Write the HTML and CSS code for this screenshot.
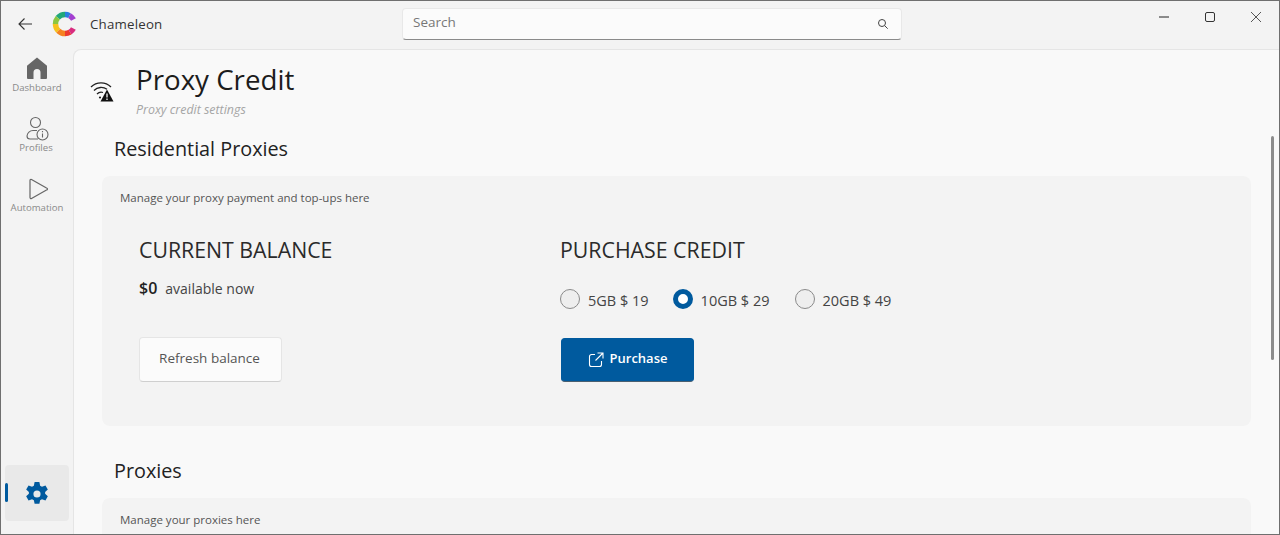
FILE: index.html
```html
<!DOCTYPE html>
<html lang="en">
<head>
<meta charset="utf-8">
<title>Chameleon</title>
<link rel="stylesheet" href="styles.css">
</head>
<body>
<div class="window">
  <header class="titlebar">
    <div class="tb-left">
      <svg class="back" width="16" height="14" viewBox="0 0 16 14"><path d="M15 7H2M7.500 1.500 2 7l5.500 5.500" fill="none" stroke="#333" stroke-width="1.100"/></svg>
      <svg class="logo" width="26" height="26" viewBox="0 0 26 26" fill="none" stroke-width="5.500">
        <path d="M13 3.500A9.500 9.500 0 0 0 5.800 6.800" stroke="#22a87a"/>
        <path d="M5.800 6.800A9.500 9.500 0 0 0 3.500 13" stroke="#8cc63f"/>
        <path d="M3.500 13A9.500 9.500 0 0 0 6.300 19.700" stroke="#f6c21c"/>
        <path d="M6.300 19.700A9.500 9.500 0 0 0 13 22.500" stroke="#f58220"/>
        <path d="M13 22.500A9.500 9.500 0 0 0 18 21.100" stroke="#ec3a2e"/>
        <path d="M18 21.100A9.500 9.500 0 0 0 21.400 17.500" stroke="#d82c7f"/>
        <path d="M13 3.500A9.500 9.500 0 0 1 17.500 4.600" stroke="#2a7fe0"/>
        <path d="M17.500 4.600A9.500 9.500 0 0 1 21.500 8.500" stroke="#a33fd0"/>
      </svg>
      <span class="app-name">Chameleon</span>
    </div>
    <div class="search">
      <span class="search-text">Search</span>
      <svg width="12" height="12" viewBox="0 0 12 12" fill="none" stroke="#444"><circle cx="5" cy="5" r="3.500"/><path d="m7.700 7.700 3 3"/></svg>
    </div>
    <div class="winctl">
      <svg width="12" height="12" viewBox="0 0 12 12"><path d="M1 6h10" stroke="#222" stroke-width="1"/></svg>
      <svg width="12" height="12" viewBox="0 0 12 12"><rect x="1.500" y="1.500" width="9" height="9" rx="1.500" fill="none" stroke="#333"/></svg>
      <svg width="12" height="12" viewBox="0 0 12 12"><path d="m1 1 10 10M11 1 1 11" stroke="#444" stroke-width=".9"/></svg>
    </div>
  </header>
  <div class="body">
    <nav class="sidebar">
      <a class="nav-item">
        <svg width="24" height="24" viewBox="0 0 24 24"><path d="M12 1.500 2 9.800V22a1 1 0 0 0 1 1h5.500v-6.500a3.500 3.500 0 0 1 7 0V23H21a1 1 0 0 0 1-1V9.800z" fill="#666"/></svg>
        <span>Dashboard</span>
      </a>
      <a class="nav-item">
        <svg width="26" height="26" viewBox="0 0 26 26" fill="none" stroke="#666" stroke-width="1.100"><circle cx="11.500" cy="6.500" r="5"/><path d="M13 14.500h-4a6 6 0 0 0-6 5.500 3 3 0 0 0 3 3h8"/><circle cx="18.500" cy="18.500" r="5.500"/><path d="M18.500 17.500v4M18.500 15v1.300"/></svg>
        <span class="label-profiles">Profiles</span>
      </a>
      <a class="nav-item">
        <svg class="icon-play" width="22" height="24" viewBox="0 0 22 24" fill="none" stroke="#666" stroke-width="1.200"><path d="M3 3.500v17a1 1 0 0 0 1.500.9L19.500 13a1 1 0 0 0 0-2L4.500 2.600A1 1 0 0 0 3 3.500z" stroke-linejoin="round"/></svg>
        <span>Automation</span>
      </a>
      <div class="nav-spacer"></div>
      <a class="nav-settings">
        <i class="nav-mark"></i>
        <svg class="gear" width="26" height="26" viewBox="0 0 24 24"><path fill="#005a9e" fill-rule="evenodd" d="M9.800 1h4.400l.7 3.300 1.700.9 3.200-1.100 2.200 3.800-2.500 2.300v1.600l2.500 2.300-2.200 3.800-3.200-1.100-1.700.9-.7 3.300H9.800l-.7-3.300-1.700-.9-3.200 1.100-2.200-3.800 2.500-2.300v-1.600L2 7.900l2.200-3.800 3.200 1.100 1.700-.9zM12 8.700a3.300 3.300 0 1 0 0 6.600 3.300 3.300 0 0 0 0-6.600z"/></svg>
      </a>
    </nav>
    <main class="content">
      <div class="page-head">
        <svg class="page-icon" width="24" height="22" viewBox="0 0 24 22" fill="none" stroke="#222" stroke-width="1.300">
          <path d="M1 6a14 14 0 0 1 20 0M4 9.500a10 10 0 0 1 13-1.200M7 13a6 6 0 0 1 6-1.500"/>
          <circle cx="10" cy="16.500" r="1.100" fill="#222" stroke="none"/>
          <path d="M17 8.500 23.500 20.500h-13z" fill="#111" stroke="none"/>
          <path d="M17 12.500v4M17 17.500v1.500" stroke="#f9f9f9" stroke-width="1.300"/>
        </svg>
        <div>
          <h1>Proxy Credit</h1>
          <p class="subtitle">Proxy credit settings</p>
        </div>
      </div>
      <h2>Residential Proxies</h2>
      <section class="card">
        <p class="card-note">Manage your proxy payment and top-ups here</p>
        <div class="columns">
          <div class="col-balance">
            <h3>CURRENT BALANCE</h3>
            <div class="balance"><b>$0</b><span>available now</span></div>
            <button class="btn"><span class="refresh-label">Refresh balance</span></button>
          </div>
          <div class="col-purchase">
            <h3>PURCHASE CREDIT</h3>
            <div class="radios">
              <label class="radio"><i class="dot"></i><span>5GB $ 19</span></label>
              <label class="radio"><i class="dot on"></i><span>10GB $ 29</span></label>
              <label class="radio"><i class="dot"></i><span>20GB $ 49</span></label>
            </div>
            <button class="btn primary">
              <svg width="16" height="16" viewBox="0 0 16 16" fill="none" stroke="#fff" stroke-width="1.100"><path d="M7 2.500H3.500a2 2 0 0 0-2 2v8a2 2 0 0 0 2 2h8a2 2 0 0 0 2-2V9"/><path d="M9.500 1h5.500v5.500M15 1 7.500 8.500"/></svg>
              <span>Purchase</span>
            </button>
          </div>
        </div>
      </section>
      <h2 class="second">Proxies</h2>
      <section class="card tall">
        <p class="card-note">Manage your proxies here</p>
      </section>
    </main>
  </div>
  <div class="scrollbar"></div>
</div>
</body>
</html>
```
FILE: styles.css
```css
* { box-sizing: border-box; }
html, body { margin: 0; height: 100%; overflow: hidden; }
body { font-family: "Open Sans", "Noto Sans", sans-serif; color: #1f1f1f; }
.window { position: relative; width: 1280px; height: 535px; border: 1px solid #6f6f6f; background: #f3f3f3; display: flex; flex-direction: column; overflow: hidden; }
.titlebar { height: 48px; flex: none; display: flex; align-items: center; position: relative; }
.tb-left { display: flex; align-items: center; width: 401px; padding-left: 16px; margin-top: -2px; }
.back { margin-right: 19px; }
.logo { margin-right: 12px; }
.app-name { font-size: 13.300px; color: #333; letter-spacing: .2px; }
.search { width: 500px; height: 32px; margin-top: -3px; background: #fbfbfb; border: 1px solid #e8e8e8; border-bottom: 1px solid #8a8a8a; border-radius: 4px; display: flex; align-items: center; justify-content: space-between; padding: 0 12px 0 10px; }
.search-text { font-size: 13.500px; color: #777; margin-bottom: 3px; }
.winctl { margin-left: auto; display: flex; gap: 34px; padding-right: 17px; margin-top: -16px; }
.body { flex: 1; display: flex; min-height: 0; }
.sidebar { width: 72px; flex: none; display: flex; flex-direction: column; align-items: center; padding-top: 6px; padding-bottom: 13px; }
.nav-item { display: flex; flex-direction: column; align-items: center; height: 60px; font-size: 9.600px; color: #8a8a8a; line-height: 12px; }
.nav-item svg { height: 26px; margin-bottom: 1px; }
.nav-item + .nav-item svg { margin-top: 1px; margin-bottom: 0; }
.nav-item .icon-play { margin-left: 2px; }
.label-profiles { margin-left: -2px; }
.nav-spacer { flex: 1; }
.nav-settings { position: relative; width: 64px; height: 56px; background: #e9e9e9; border-radius: 4px; display: flex; align-items: center; justify-content: center; }
.gear { margin-top: 1px; }
.nav-mark { position: absolute; left: 0; top: 18px; width: 3px; height: 19px; border-radius: 2px; background: #005a9e; }
.content { flex: 1; min-width: 0; background: #f9f9f9; border-left: 1px solid #e5e5e5; border-top: 1px solid #e5e5e5; border-top-left-radius: 8px; padding: 10px 28px 0; overflow: hidden; }
.page-head { display: flex; gap: 22px; margin-left: -12px; align-items: flex-start; }
.page-icon { margin-top: 21px; flex: none; }
h1 { margin: 0; font-size: 27.700px; font-weight: 400; line-height: 38px; color: #1c1c1c; }
.subtitle { margin: 4px 0 0; font-size: 12.400px; line-height: 16px; font-style: italic; color: #a5a5a5; }
h2 { margin: 18px 0 14px 12px; font-size: 19.800px; font-weight: 400; line-height: 26px; color: #222; }
h2.second { margin-top: 32px; margin-bottom: 14px; }
.card { width: 1149px; background: #f3f3f3; border-radius: 8px; padding: 14px 18px 0; }
.card.tall { min-height: 60px; }
.card-note { margin: 0; font-size: 11.500px; line-height: 16px; color: #555; }
.columns { display: flex; padding: 31px 0 44px 19px; }
.col-balance { width: 421px; }
h3 { margin: 0; font-size: 21.300px; font-weight: 400; line-height: 26px; color: #2a2a2a; }
.balance { display: flex; align-items: baseline; gap: 8px; margin-top: 15px; height: 59px; font-size: 14px; color: #444; line-height: 20px; }
.balance b { font-size: 16px; font-weight: 600; color: #222; }
.btn { height: 45px; width: 143px; padding: 0; background: #fbfbfb; border: 1px solid #e5e5e5; border-bottom-color: #cfcfcf; border-radius: 4px; font: inherit; font-size: 13.500px; color: #555; display: flex; align-items: center; justify-content: center; gap: 6px; }
.btn span { margin-bottom: 3px; }
.btn .refresh-label { margin-right: 2px; }
.btn svg { margin-bottom: 1px; }
.btn.primary { width: 133px; height: 44px; background: #005a9e; border-color: #005a9e; border-bottom-color: #4a5f70; color: #fff; font-size: 13px; font-weight: 600; margin-left: 1px; }
.btn.primary span { margin-bottom: 4px; }
.radios { display: flex; gap: 24px; margin-top: 25px; height: 50px; align-items: flex-start; }
.radio { display: flex; align-items: center; gap: 8px; font-size: 14.500px; color: #444; height: 22px; }
.radio span { margin-top: 3px; }
.radio + .radio + .radio { margin-left: 1px; }
.dot { width: 20px; height: 20px; border-radius: 50%; border: 1px solid #8a8a8a; background: #eee; }
.dot.on { border: 5px solid #005a9e; background: #fff; }
.scrollbar { position: absolute; right: 5px; top: 135px; width: 3px; height: 224px; border-radius: 2px; background: #8c8c8c; }
```
